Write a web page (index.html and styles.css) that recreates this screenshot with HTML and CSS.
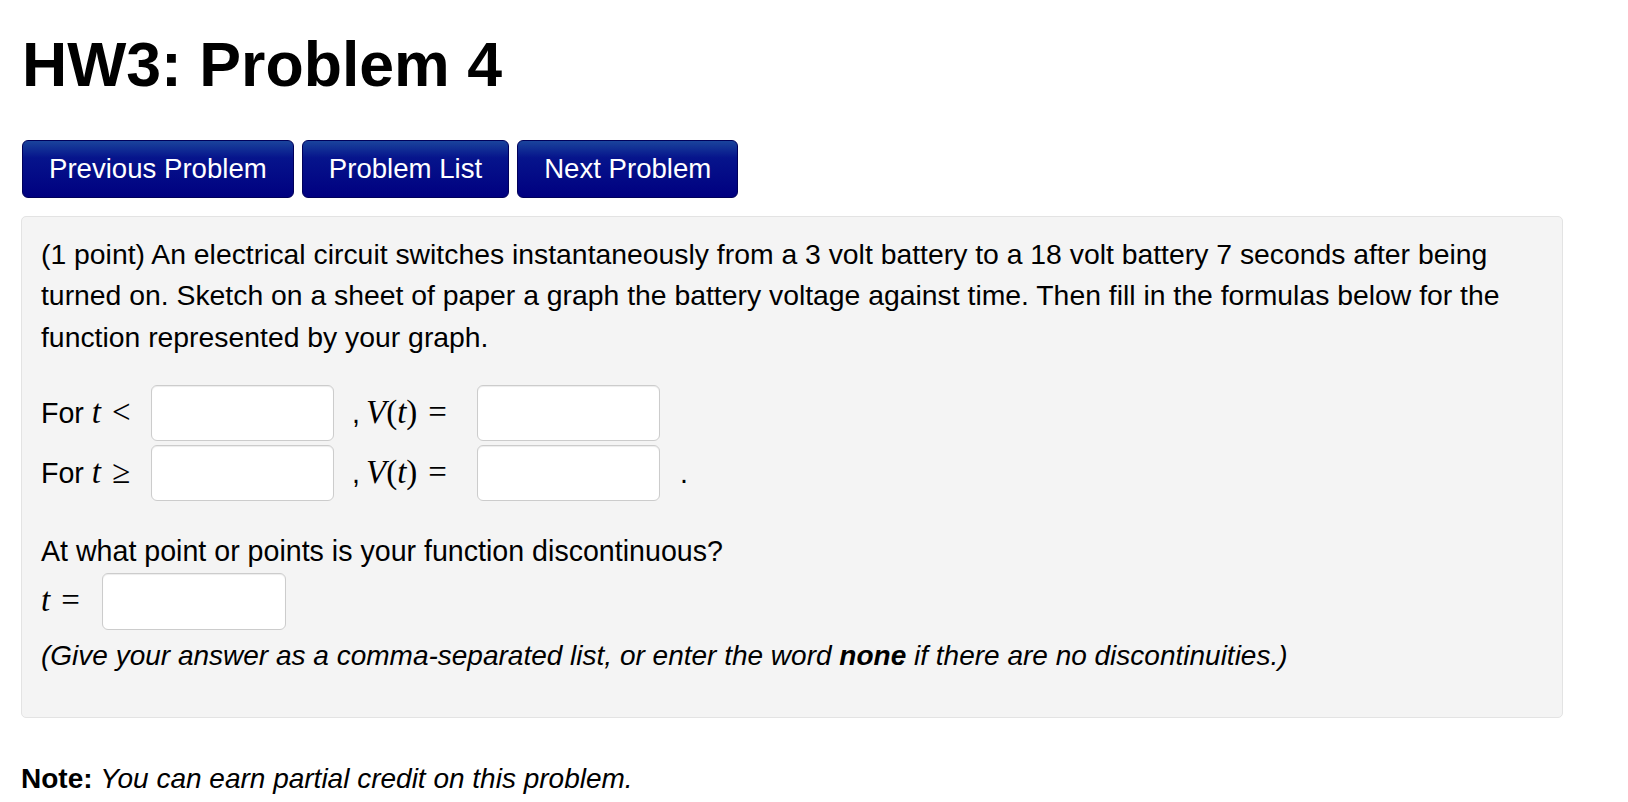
FILE: index.html
```html
<!DOCTYPE html>
<html lang="en">
<head>
  <meta charset="UTF-8">
  <title>HW3: Problem 4</title>
  <link rel="stylesheet" href="styles.css">
</head>
<body>

<h1>HW3: Problem 4</h1>

<div class="nav">
  <button class="nav-btn">Previous Problem</button>
  <button class="nav-btn">Problem List</button>
  <button class="nav-btn">Next Problem</button>
</div>

<div class="problem">
  <p class="statement">(1 point) An electrical circuit switches instantaneously from a 3 volt battery to a 18 volt battery 7 seconds after being turned on. Sketch on a sheet of paper a graph the battery voltage against time. Then fill in the formulas below for the function represented by your graph.</p>

  <div class="answers">
    <div class="row">
      <span class="label">For <span class="math"><i>t</i><span class="rel">&lt;</span></span></span>
      <input type="text" class="answer">
      <span class="mid">,<span class="math"><i>V</i>(<i>t</i>)<span class="rel">=</span></span></span>
      <input type="text" class="answer">
    </div>
    <div class="row">
      <span class="label">For <span class="math"><i>t</i><span class="rel">&ge;</span></span></span>
      <input type="text" class="answer">
      <span class="mid">,<span class="math"><i>V</i>(<i>t</i>)<span class="rel">=</span></span></span>
      <input type="text" class="answer">
      <span class="period">.</span>
    </div>
  </div>

  <p class="question">At what point or points is your function discontinuous?</p>
  <div class="row single">
    <span class="label short"><span class="math"><i>t</i><span class="rel">=</span></span></span>
    <input type="text" class="answer">
  </div>
  <p class="hint">(Give your answer as a comma-separated list, or enter the word <b>none</b> if there are no discontinuities.)</p>
</div>

<p class="note"><b>Note:</b> <i>You can earn partial credit on this problem.</i></p>

</body>
</html>
```

FILE: styles.css
```css
body {
  margin: 0;
  padding: 0 21px;
  font-family: "Liberation Sans", Arial, sans-serif;
  font-size: 28.6px;
  color: #000;
  background: #fff;
}
h1 {
  margin: 30px 0 0 1px;
  font-size: 62.6px;
  line-height: 68px;
  font-weight: bold;
}
.nav {
  display: flex;
  gap: 8px;
  margin-top: 42px;
  padding-left: 1px;
}
.nav-btn {
  font-family: "Liberation Sans", Arial, sans-serif;
  font-size: 27.6px;
  line-height: 32px;
  padding: 12px 26px;
  color: #fff;
  background: linear-gradient(to bottom, #1a449c, #06148c 30%, #000080);
  border: 1px solid #00005a;
  border-radius: 6px;
}
.problem {
  margin-top: 18px;
  width: 1502px;
  padding: 17px 19px 41px 19px;
  background: #f4f4f4;
  border: 1px solid #e3e3e3;
  border-radius: 5px;
  line-height: 41.4px;
}
.problem p {
  margin: 0;
}
.statement {
  font-size: 28.35px;
}
.answers {
  margin-top: 27px;
  display: flex;
  flex-direction: column;
  gap: 4px;
}
.row {
  display: flex;
  align-items: center;
  height: 56px;
}
.label {
  width: 110px;
  white-space: nowrap;
}
.label.short {
  width: 61px;
}
.mid {
  width: 143px;
  padding-left: 18px;
  box-sizing: border-box;
  white-space: nowrap;
}
.period {
  padding-left: 20px;
}
.math {
  font-family: "Liberation Serif", "Times New Roman", serif;
  font-size: 33px;
}
.math i {
  font-style: italic;
}
.mid .math {
  margin-left: 6px;
}
.rel {
  margin: 0 9px 0 11px;
}
.answer {
  width: 183px;
  height: 56px;
  box-sizing: border-box;
  border: 1px solid #ccc;
  border-radius: 6px;
  background: #fff;
  box-shadow: inset 0 1px 1px rgba(0,0,0,0.075);
  font-size: 24px;
  padding: 4px 8px;
}
.question {
  margin-top: 30px !important;
}
.single {
  height: 57px;
}
.single .answer {
  height: 57px;
  width: 184px;
}
.hint {
  font-style: italic;
  font-size: 28px;
  margin-top: 5px !important;
}
.note {
  margin: 40px 0 0 0;
  font-size: 28px;
  line-height: 41.4px;
}
```
